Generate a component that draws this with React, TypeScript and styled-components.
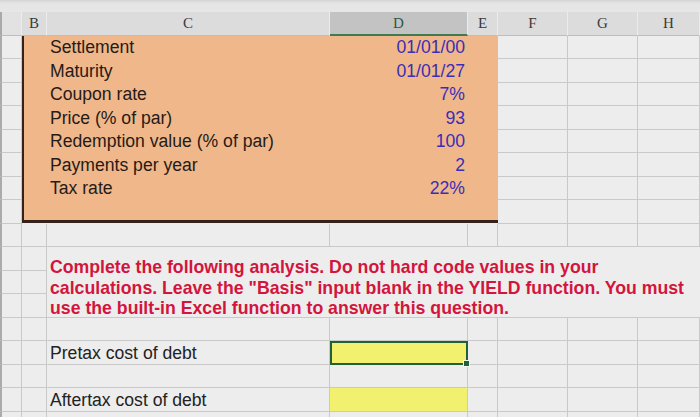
import React from "react";
import styled, { createGlobalStyle, css } from "styled-components";

const GlobalStyle = createGlobalStyle`
  html, body { margin: 0; padding: 0; background: #ececec; }
  body { width: 700px; height: 417px; overflow: hidden; font-family: "Liberation Sans", Arial, sans-serif; }
`;

const ROW_H = 23.5;
const COLUMNS = ["", "B", "C", "D", "E", "F", "G", "H"];
const ACTIVE_COL = "D";
const TOTAL_ROWS = 17;

const Page = styled.div`
  width: 700px;
  height: 417px;
  overflow: hidden;
  display: flex;
  flex-direction: column;
  background: #ececec;
`;

const TopStrip = styled.div`
  height: 12px;
  flex: none;
  background: linear-gradient(#d4d4d4 0, #e4e4e4 3px, #e7e7e7 100%);
`;

const Sheet = styled.div`
  display: grid;
  grid-template-columns: 22px 25px 283px 138px 30px 70px 70px 1fr;
  grid-auto-rows: ${ROW_H}px;
`;

const HeaderCell = styled.div<{ $active?: boolean; $first?: boolean }>`
  box-sizing: border-box;
  display: flex;
  align-items: center;
  justify-content: center;
  font-family: "Liberation Serif", "Times New Roman", serif;
  font-size: 15px;
  color: #3a3a3a;
  background: #dcdcdc;
  border-right: 1px solid #ececec;
  border-bottom: 1.5px solid #bdbdbd;
  padding-top: 1px;
  ${(p) =>
    p.$first &&
    css`
      border-left: 2px solid #a9a9a9;
      background: #e2e2e2;
    `}
  ${(p) =>
    p.$active &&
    css`
      background: #c3c3c3;
      color: #2c5a42;
      border-bottom: 2px solid #3f7a52;
    `}
`;

const Cell = styled.div<{ $first?: boolean }>`
  box-sizing: border-box;
  background: #ededed;
  border-right: 1px solid #c9c9c9;
  border-bottom: 1px solid #c9c9c9;
  display: flex;
  align-items: center;
  min-width: 0;
  ${(p) =>
    p.$first &&
    css`
      border-left: 2px solid #ababab;
    `}
`;

const LabelCell = styled(Cell)`
  padding-left: 3px;
  font-size: 17.6px;
  color: #222;
  white-space: nowrap;
  overflow: visible;
  padding-top: 2px;
`;

const AnswerCell = styled.div<{ $selected?: boolean }>`
  position: relative;
  box-sizing: border-box;
  background: #f2f06f;
  border-right: 1px solid #d8d760;
  border-bottom: 1px solid #c9c9c9;
  ${(p) =>
    p.$selected &&
    css`
      border: 2px solid #22603a;
    `}
`;

const FillHandle = styled.span`
  position: absolute;
  right: -4px;
  bottom: -4px;
  width: 5px;
  height: 5px;
  background: #22603a;
  border: 1px solid #f3f3f3;
`;

const InputPanel = styled.div`
  grid-row: 2 / span 8;
  grid-column: 2 / span 4;
  box-sizing: border-box;
  background: #f0b78a;
  border-left: 2px solid #35221a;
  border-right: 2.5px solid #35221a;
  border-bottom: 3px solid #35221a;
  margin-right: -1.5px;
  margin-bottom: 1px;
  display: grid;
  grid-template-columns: 23px 283px 138px 1fr;
  grid-auto-rows: ${ROW_H}px;
`;

const PanelLabel = styled.div`
  grid-column: 2;
  padding-left: 3px;
  display: flex;
  align-items: center;
  padding-top: 1px;
  font-size: 17.6px;
  color: #261b17;
  white-space: nowrap;
`;

const PanelValue = styled.div`
  grid-column: 3;
  padding-right: 3px;
  display: flex;
  align-items: center;
  justify-content: flex-end;
  padding-top: 1px;
  font-size: 17.6px;
  color: #3b2eb6;
`;

const Instructions = styled.div`
  grid-row: 11 / span 3;
  grid-column: 3 / span 6;
  box-sizing: border-box;
  background: #ededed;
  border-bottom: 1px solid #c9c9c9;
  padding-left: 3px;
  display: flex;
  align-items: flex-end;
  font-weight: bold;
  font-size: 17.7px;
  line-height: 20.4px;
  color: #d3153d;
  white-space: nowrap;
`;

const InstructionText = styled.p`
  margin: 0 0 -2px;
`;

const inputs: [string, string][] = [
  ["Settlement", "01/01/00"],
  ["Maturity", "01/01/27"],
  ["Coupon rate", "7%"],
  ["Price (% of par)", "93"],
  ["Redemption value (% of par)", "100"],
  ["Payments per year", "2"],
  ["Tax rate", "22%"],
];

// grid rows: 1 = header, data row k -> grid row k + 1
const labels: Record<number, string> = {
  15: "Pretax cost of debt",
  17: "Aftertax cost of debt",
};
const answers: Record<number, boolean> = { 15: true, 17: false };

function covered(row: number, col: number) {
  if (row >= 2 && row <= 9 && col >= 2 && col <= 5) return true;
  if (row >= 11 && row <= 13 && col >= 3) return true;
  return false;
}

export default function App() {
  const cells: React.ReactNode[] = [];
  for (let r = 2; r <= TOTAL_ROWS + 1; r++) {
    for (let c = 1; c <= 8; c++) {
      if (covered(r, c)) continue;
      const key = `${r}-${c}`;
      const pos = { gridRow: r, gridColumn: c };
      if (c === 3 && labels[r]) {
        cells.push(
          <LabelCell key={key} style={pos}>
            {labels[r]}
          </LabelCell>
        );
      } else if (c === 4 && r in answers) {
        cells.push(
          <AnswerCell key={key} style={pos} $selected={answers[r]}>
            {answers[r] && <FillHandle />}
          </AnswerCell>
        );
      } else {
        cells.push(<Cell key={key} style={pos} $first={c === 1} />);
      }
    }
  }

  return (
    <>
      <GlobalStyle />
      <Page>
        <TopStrip />
        <Sheet>
          {COLUMNS.map((h, i) => (
            <HeaderCell key={i} $first={i === 0} $active={h === ACTIVE_COL}>
              {h}
            </HeaderCell>
          ))}
          <InputPanel>
            {inputs.map(([label, value]) => (
              <React.Fragment key={label}>
                <PanelLabel>{label}</PanelLabel>
                <PanelValue>{value}</PanelValue>
              </React.Fragment>
            ))}
          </InputPanel>
          <Instructions>
            <InstructionText>
              Complete the following analysis. Do not hard code values in your
              <br />
              calculations. Leave the "Basis" input blank in the YIELD function. You must
              <br />
              use the built-in Excel function to answer this question.
            </InstructionText>
          </Instructions>
          {cells}
        </Sheet>
      </Page>
    </>
  );
}
